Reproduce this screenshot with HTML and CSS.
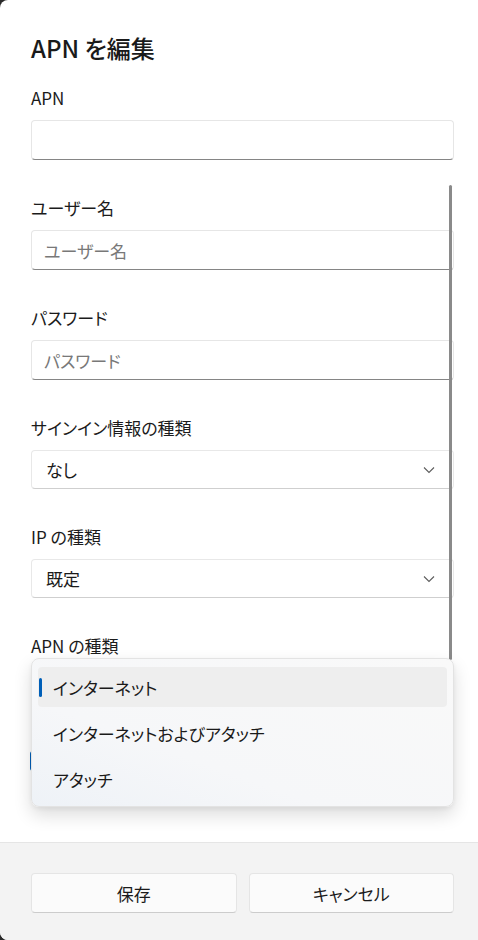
FILE: index.html
```html
<!DOCTYPE html>
<html lang="ja">
<head>
<meta charset="utf-8">
<title>APN を編集</title>
<link rel="stylesheet" href="styles.css">
</head>
<body>
<div class="dialog">
  <div class="content">
    <h1 class="title">APN を編集</h1>

    <div class="field">
      <div class="label">APN</div>
      <div class="input"></div>
    </div>

    <div class="field">
      <div class="label">ユーザー名</div>
      <div class="input"><span class="placeholder">ユーザー名</span></div>
    </div>

    <div class="field">
      <div class="label">パスワード</div>
      <div class="input"><span class="placeholder">パスワード</span></div>
    </div>

    <div class="field">
      <div class="label">サインイン情報の種類</div>
      <div class="select"><span class="value">なし</span>
        <svg class="chev" width="12" height="8" viewBox="0 0 12 8"><path d="M1 1.5 L6 6.5 L11 1.5" fill="none" stroke="#5c5c5c" stroke-width="1.1"/></svg>
      </div>
    </div>

    <div class="field">
      <div class="label">IP の種類</div>
      <div class="select"><span class="value">既定</span>
        <svg class="chev" width="12" height="8" viewBox="0 0 12 8"><path d="M1 1.5 L6 6.5 L11 1.5" fill="none" stroke="#5c5c5c" stroke-width="1.1"/></svg>
      </div>
    </div>

    <div class="field">
      <div class="label">APN の種類</div>
      <div class="select">
        <svg class="chev" width="12" height="8" viewBox="0 0 12 8"><path d="M1 1.5 L6 6.5 L11 1.5" fill="none" stroke="#5c5c5c" stroke-width="1.1"/></svg>
      </div>
    </div>

    <div class="check-row">
      <span class="checkbox"></span>
    </div>

    <div class="scrollbar"></div>

    <div class="popup">
      <div class="item selected"><span class="indicator"></span>インターネット</div>
      <div class="item">インターネットおよびアタッチ</div>
      <div class="item">アタッチ</div>
    </div>
  </div>

  <div class="footer">
    <div class="button">保存</div>
    <div class="button">キャンセル</div>
  </div>
</div>
</body>
</html>
```

FILE: styles.css
```css
* { box-sizing: border-box; }

html, body {
  margin: 0;
  padding: 0;
  background: #2a2a2a;
}

body {
  font-family: "Noto Sans CJK JP", "Noto Sans", sans-serif;
  font-feature-settings: "palt" 1;
  color: #1b1b1b;
  font-size: 17px;
}

.dialog {
  width: 478px;
  height: 940px;
  display: flex;
  flex-direction: column;
  background: #ffffff;
  border-radius: 8px 0 0 8px;
  overflow: hidden;
}

.content {
  position: relative;
  height: 842px;
  flex: none;
  overflow: hidden;
  padding: 32px 24px 0 31px;
  display: flex;
  flex-direction: column;
}

.title {
  margin: 0 0 22px;
  font-size: 24px;
  line-height: 32px;
  font-weight: 500;
  color: #1a1a1a;
}

.field {
  display: flex;
  flex-direction: column;
  margin-bottom: 36px;
}

.label {
  font-size: 17px;
  line-height: 24px;
  margin-bottom: 10px;
  color: #1b1b1b;
}

.input {
  height: 40px;
  border: 1px solid #e6e6e6;
  border-bottom: 1px solid #858585;
  border-radius: 4px;
  background: #ffffff;
  display: flex;
  align-items: center;
  padding: 0 12px;
}

.placeholder {
  color: #787878;
  font-size: 17px;
}

.select {
  height: 39px;
  border: 1px solid #e8e8e8;
  border-bottom-color: #cfcfcf;
  border-radius: 4px;
  background: #ffffff;
  display: flex;
  align-items: center;
  justify-content: space-between;
  padding: 0 18px 0 14px;
}

.select .chev {
  margin-left: auto;
}

.value {
  font-size: 17px;
  color: #1b1b1b;
}

.chev {
  display: block;
}

.check-row {
  margin-top: 8px;
  display: flex;
  align-items: center;
  gap: 12px;
}

.checkbox {
  width: 20px;
  height: 20px;
  margin-left: -1px;
  border-radius: 3px;
  background: #005fb8;
}

.scrollbar {
  position: absolute;
  left: 449px;
  top: 185px;
  width: 3px;
  height: 475px;
  border-radius: 2px;
  background: #8a8a8a;
}

.popup {
  position: absolute;
  left: 31px;
  top: 658px;
  width: 423px;
  height: 149px;
  border: 1px solid #e3e3e3;
  border-radius: 8px;
  background: linear-gradient(20deg, #eef2f7 0%, #f6f7f9 35%, #f9f9f9 100%);
  box-shadow: 0 8px 18px rgba(0, 0, 0, 0.14), 0 2px 4px rgba(0, 0, 0, 0.05);
  padding: 8px 6px 7px;
  display: flex;
  flex-direction: column;
  gap: 6px;
}

.item {
  position: relative;
  height: 40px;
  display: flex;
  align-items: center;
  padding-left: 15px;
  border-radius: 4px;
  font-size: 17px;
  color: #1a1a1a;
}

.item.selected {
  background: #eeeeee;
}

.indicator {
  position: absolute;
  left: 1px;
  top: 11px;
  width: 3px;
  height: 19px;
  border-radius: 2px;
  background: #005fb8;
}

.footer {
  flex: 1;
  background: #f3f3f3;
  border-top: 1px solid #e5e5e5;
  padding: 30px 24px 0 31px;
  display: grid;
  grid-template-columns: 1fr 1fr;
  column-gap: 12px;
  align-content: start;
}

.button {
  height: 40px;
  background: #fbfbfb;
  border: 1px solid #e5e5e5;
  border-bottom-color: #cccccc;
  border-radius: 4px;
  display: flex;
  align-items: center;
  justify-content: center;
  font-size: 17px;
  color: #1b1b1b;
}
```
